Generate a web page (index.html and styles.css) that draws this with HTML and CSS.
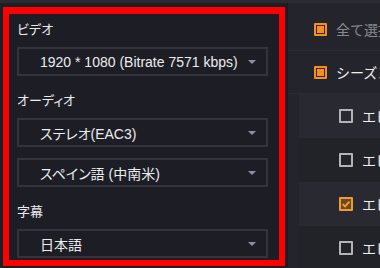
FILE: index.html
```html
<!DOCTYPE html>
<html lang="ja">
<head>
<meta charset="utf-8">
<link rel="stylesheet" href="styles.css">
</head>
<body>
<div class="app">
  <div class="left">
    <div class="group">
      <div class="label">ビデオ</div>
      <div class="select"><span>1920 * 1080 (Bitrate 7571 kbps)</span><i class="caret"></i></div>
    </div>
    <div class="group">
      <div class="label">オーディオ</div>
      <div class="select"><span>ステレオ(EAC3)</span><i class="caret"></i></div>
      <div class="select"><span>スペイン語 (中南米)</span><i class="caret"></i></div>
    </div>
    <div class="group">
      <div class="label">字幕</div>
      <div class="select"><span>日本語</span><i class="caret"></i></div>
    </div>
  </div>
  <div class="right">
    <div class="row top dim"><i class="cb cb-full"></i><span>全て選択</span></div>
    <div class="row top"><i class="cb cb-full"></i><span>シーズン 1</span></div>
    <div class="episodes">
      <div class="ep light"><i class="cb"></i><span>エピソード 1</span></div>
      <div class="ep"><i class="cb"></i><span>エピソード 2</span></div>
      <div class="ep light"><i class="cb cb-check"><svg viewBox="0 0 10 10" width="10" height="10"><path d="M1.6 5.2 L4 7.4 L8.4 2.6" fill="none" stroke="#f7a030" stroke-width="1.8"/></svg></i><span>エピソード 3</span></div>
      <div class="ep"><i class="cb"></i><span>エピソード 4</span></div>
    </div>
  </div>
</div>
</body>
</html>
```
FILE: styles.css
```css
* { box-sizing: border-box; }
html, body { margin: 0; padding: 0; }
body {
  width: 380px;
  height: 268px;
  overflow: hidden;
  background: #1e1f26;
  font-family: "Liberation Sans", "Noto Sans CJK JP", sans-serif;
  color: #e8e8ea;
}
.app {
  display: flex;
  height: 268px;
  border-top: 3px solid #2a2b32;
}
.left {
  width: 282px;
  height: 259px;
  margin: 4px 0 0 3px;
  border: 6px solid #ff0000;
  border-top-width: 7px;
  background: #1d1e25;
  padding: 5px 11px 0 8px;
  display: flex;
  flex-direction: column;
  gap: 14px;
}
.group {
  display: flex;
  flex-direction: column;
  gap: 11px;
}
.label {
  font-family: "Noto Sans CJK JP", sans-serif;
  font-feature-settings: "palt";
  font-size: 13px;
  line-height: 20px;
  height: 20px;
  margin-bottom: -3px;
  color: #ececee;
}
.select {
  height: 29px;
  border: 2px solid #33343c;
  background: #1d1e25;
  display: flex;
  align-items: center;
  justify-content: space-between;
  padding: 0 10px 0 21px;
  font-size: 14px;
  color: #ececee;
}
.select span {
  font-family: "Liberation Sans", "Noto Sans CJK JP", sans-serif;
  font-feature-settings: "palt";
}
.caret {
  width: 0;
  height: 0;
  border-left: 4px solid transparent;
  border-right: 4px solid transparent;
  border-top: 4px solid #8e8da3;
}
.right {
  flex: 1;
  margin-left: 2px;
  background: #24252c;
  padding-top: 5px;
  overflow: hidden;
  white-space: nowrap;
  border-left: 1px solid #1a1b21;
}
.row {
  height: 43px;
  display: flex;
  align-items: center;
  gap: 9px;
  padding-left: 26px;
  font-family: "Noto Sans CJK JP", sans-serif;
  font-size: 14px;
  color: #f0f0f0;
}
.row.top { border-bottom: 1px solid #2c2d34; }
.row.dim { color: #8a8a8e; }
.episodes {
  margin-left: 11px;
}
.ep {
  height: 44px;
  display: flex;
  align-items: center;
  gap: 9px;
  padding-left: 40px;
  background: #222329;
  font-family: "Noto Sans CJK JP", sans-serif;
  font-size: 14px;
  color: #f0f0f0;
}
.ep.light { background: #292a31; }
.cb {
  flex: none;
  width: 14px;
  height: 14px;
  border: 2px solid #b4b4b8;
  border-radius: 1px;
  display: flex;
  align-items: center;
  justify-content: center;
}
.cb-full {
  border-color: #f5901e;
  background: #f5901e;
  box-shadow: inset 0 0 0 1px #3a2a15;
  width: 13px;
  height: 13px;
}
.cb-check {
  border-color: #f29a33;
  background: #6b4a22;
}
.cb-check svg { display: block; }
```
